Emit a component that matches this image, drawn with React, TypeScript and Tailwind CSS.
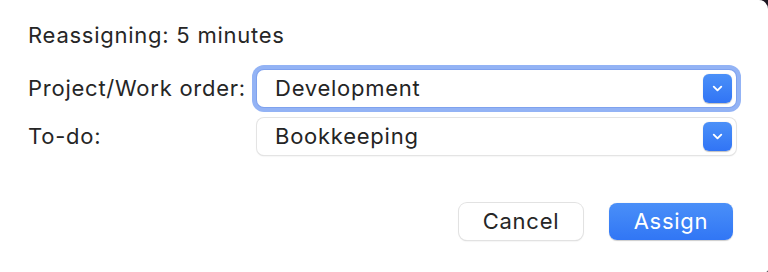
import { ChevronDown } from "lucide-react";

function Select({ value, focused = false }: { value: string; focused?: boolean }) {
  return (
    <div
      className={`flex h-[37px] items-center justify-between rounded-[7px] bg-white pl-[18px] pr-[4px] ${
        focused
          ? "shadow-[0_0_0_1px_#7fa2ee,0_0_0_5px_#93b3f5]"
          : "shadow-[0_0_0_1px_#e4e4e4,0_1px_1.5px_rgba(0,0,0,0.18)]"
      }`}
    >
      <span className="text-[22px] tracking-[0.75px] text-[#242424]">{value}</span>
      <span className="flex h-[29px] w-[29px] items-center justify-center rounded-[6px] bg-gradient-to-b from-[#4b90f8] to-[#3174f5] shadow-[0_0.5px_1px_rgba(0,0,0,0.25)]">
        <ChevronDown size={15} strokeWidth={3} className="text-white" />
      </span>
    </div>
  );
}

export default function App() {
  return (
    <div className="h-[272px] w-[768px] bg-[#1d1722] font-['Inter','Liberation_Sans',sans-serif]">
      <div className="flex h-full w-full flex-col rounded-tr-[9px] rounded-br-[2px] bg-white pl-[28px] pr-[32px] pt-[21px] text-[22px] tracking-[0.75px] text-[#262626]">
        <p className="leading-[28px]">Reassigning: 5 minutes</p>

        <div className="mt-[21px] grid grid-cols-[229px_1fr] items-center gap-y-[11px]">
          <span>Project/Work order:</span>
          <Select value="Development" focused />
          <span>To-do:</span>
          <Select value="Bookkeeping" />
        </div>

        <div className="mt-[48px] flex justify-end gap-[26px] pr-[3px]">
          <button className="h-[37px] w-[124px] rounded-[8px] bg-white text-[#262626] shadow-[0_0_0_1px_#e2e2e2,0_1px_1.5px_rgba(0,0,0,0.2)]">
            Cancel
          </button>
          <button className="h-[37px] w-[124px] rounded-[8px] bg-gradient-to-b from-[#4a8ff8] to-[#3176f5] text-white shadow-[0_0.5px_1px_rgba(0,0,0,0.2)]">
            Assign
          </button>
        </div>
      </div>
    </div>
  );
}
